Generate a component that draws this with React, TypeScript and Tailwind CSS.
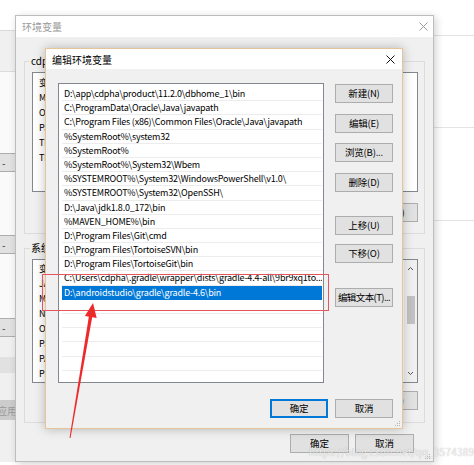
import React from "react";

const paths = [
  "D:\\app\\cdpha\\product\\11.2.0\\dbhome_1\\bin",
  "C:\\ProgramData\\Oracle\\Java\\javapath",
  "C:\\Program Files (x86)\\Common Files\\Oracle\\Java\\javapath",
  "%SystemRoot%\\system32",
  "%SystemRoot%",
  "%SystemRoot%\\System32\\Wbem",
  "%SYSTEMROOT%\\System32\\WindowsPowerShell\\v1.0\\",
  "%SYSTEMROOT%\\System32\\OpenSSH\\",
  "D:\\Java\\jdk1.8.0_172\\bin",
  "%MAVEN_HOME%\\bin",
  "D:\\Program Files\\Git\\cmd",
  "D:\\Program Files\\TortoiseSVN\\bin",
  "D:\\Program Files\\TortoiseGit\\bin",
  "C:\\Users\\cdpha\\.gradle\\wrapper\\dists\\gradle-4.4-all\\9br9xq1to...",
  "D:\\androidstudio\\gradle\\gradle-4.6\\bin",
  "", "", "", "", "", "",
];

const userVars = ["变量", "MOZ_PLUGIN_PATH", "OneDrive", "Path", "TEMP", "TMP"];
const sysVars = ["变量", "JAVA_HOME", "MAVEN_HOME", "NUMBER_OF_PROCESSORS", "OS", "Path", "PATHEXT", "PERL_HOME"];

function CloseX({ color }: { color: string }) {
  return (
    <svg width="9" height="9" viewBox="0 0 9 9">
      <path d="M0.5 0.5 L8.5 8.5 M8.5 0.5 L0.5 8.5" stroke={color} strokeWidth="1" />
    </svg>
  );
}

function Grip() {
  return (
    <svg width="6" height="6" viewBox="0 0 6 6">
      <rect x="4" y="0" width="1" height="1" fill="#b5b5b5" />
      <rect x="2" y="2" width="1" height="1" fill="#b5b5b5" />
      <rect x="4" y="2" width="1" height="1" fill="#b5b5b5" />
      <rect x="0" y="4" width="1" height="1" fill="#b5b5b5" />
      <rect x="2" y="4" width="1" height="1" fill="#b5b5b5" />
      <rect x="4" y="4" width="1" height="1" fill="#b5b5b5" />
    </svg>
  );
}

function Btn({ label, focus, tight }: { label: string; focus?: boolean; tight?: boolean }) {
  const base = focus
    ? "w-[58px] h-[19px] flex items-center justify-center whitespace-nowrap bg-[#e1e1e1] border-2 border-[#0078d7] text-[9.5px] text-black"
    : "w-[58px] h-[19px] flex items-center justify-center whitespace-nowrap bg-[#e1e1e1] border border-[#adadad] text-[9.5px] text-black";
  return (
    <div className={base + (tight ? " tracking-[-0.6px]" : " tracking-[-0.2px]")}>
      {label}
    </div>
  );
}

export default function App() {
  return (
    <div className="relative w-[474px] h-[465px] overflow-hidden bg-white font-['Noto_Sans_CJK_SC',sans-serif]">
      {/* faint lines of the window behind, right side */}
      <div className="absolute left-0 right-0 top-[35px] h-px bg-[#e4e4e4]" />
      <div className="absolute left-[434px] right-0 top-[127px] h-px bg-[#e4e4e4]" />
      <div className="absolute left-[434px] right-0 top-[220px] h-px bg-[#e4e4e4]" />

      {/* system properties window, left strip */}
      <div className="absolute left-0 top-[30px] w-[15px] h-[432px] bg-[#f0f0f0] border-t border-[#dadada] flex flex-col overflow-hidden text-[10px]">
        <div className="h-[41px] border-b border-[#dcdcdc]" />
        <div className="h-[81px] bg-[#fafafa]" />
        <div className="h-[19px] bg-[#e1e1e1] border-y border-[#adadad] flex items-center pl-[2px] text-[#333]">-</div>
        <div className="h-[63px] bg-[#fafafa]" />
        <div className="h-[19px] bg-[#e1e1e1] border-y border-[#adadad] flex items-center pl-[2px] text-[#333]">-</div>
        <div className="h-[64px] bg-[#fafafa]" />
        <div className="h-[19px] bg-[#e1e1e1] border-y border-[#adadad] flex items-center pl-[2px] text-[#333]">-</div>
        <div className="h-[20px]" />
        <div className="h-[16px] bg-[#e1e1e1]" />
        <div className="h-[27px]" />
        <div className="h-[20px] bg-[#cccccc] flex items-center whitespace-nowrap text-[#9a9a9a] -ml-[3px]">应用(A)</div>
      </div>

      {/* 环境变量 window */}
      <div className="absolute left-[15px] top-[15px] w-[419px] h-[447px] bg-[#f0f0f0] border border-[#bdbdbd] shadow-[2px_2px_8px_rgba(0,0,0,0.18)] flex flex-col">
        <div className="h-[21px] bg-white flex items-center justify-between pl-[6px] pr-[5px] text-[10px] text-[#999]">
          <span>环境变量</span>
          <CloseX color="#999" />
        </div>
        <div className="flex-1 flex flex-col px-[8px] pt-[17px]">
          <fieldset className="border border-[#dcdcdc] pl-[7px] pr-[6px] pb-[11px]">
            <legend className="-ml-[2px] px-[1px] text-[10px] text-black leading-[14px]">cdpha 的用户变量(U)</legend>
            <div className="mt-[4px] h-[120px] bg-white border border-[#828790] pt-[2px] pl-[6px] text-[9px] tracking-[-0.1px] text-black">
              {userVars.map((v) => (
                <div key={v} className="h-[15px] leading-[15px]">{v}</div>
              ))}
            </div>
            <div className="mt-[11px] flex justify-end">
              <Btn label="删除(D)" />
            </div>
          </fieldset>
          <fieldset className="mt-[7px] border border-[#dcdcdc] pl-[7px] pr-[6px] pb-[12px]">
            <legend className="-ml-[2px] px-[1px] text-[10px] text-black leading-[14px]">系统变量(S)</legend>
            <div className="mt-[4px] h-[124px] bg-white border border-[#828790] flex text-[9px] tracking-[-0.1px] text-black">
              <div className="flex-1 pt-[1px] pl-[6px]">
                {sysVars.map((v) => (
                  <div key={v} className="h-[15px] leading-[15px]">{v}</div>
                ))}
              </div>
              <div className="w-[13px] bg-[#f0f0f0] flex flex-col items-center">
                <svg width="7" height="14" viewBox="0 0 7 14" className="mt-[2px]">
                  <path d="M1 8 L3.5 5.5 L6 8" stroke="#555" strokeWidth="1" fill="none" />
                </svg>
                <div className="mt-[20px] w-[8px] h-[28px] bg-[#c2c2c2]" />
                <div className="flex-1" />
                <svg width="7" height="14" viewBox="0 0 7 14" className="mb-[2px]">
                  <path d="M1 6 L3.5 8.5 L6 6" stroke="#555" strokeWidth="1" fill="none" />
                </svg>
              </div>
            </div>
            <div className="mt-[8px] flex justify-end">
              <Btn label="删除(L)" />
            </div>
          </fieldset>
          <div className="mt-[11px] flex justify-end gap-[6px] pr-[11px]">
            <div className="w-[59px] h-[19px] flex items-center justify-center bg-[#e1e1e1] border border-[#adadad] text-[9.5px] text-black">确定</div>
            <div className="w-[59px] h-[19px] flex items-center justify-center bg-[#e1e1e1] border border-[#adadad] text-[9.5px] text-black">取消</div>
          </div>
          <div className="flex-1 flex items-end justify-end pb-[1px] -mr-[6px]">
            <Grip />
          </div>
        </div>
      </div>

      {/* 编辑环境变量 dialog */}
      <div className="absolute left-[45px] top-[48px] w-[358px] h-[381px] bg-[#f0f0f0] border border-[#e6c49a] shadow-[0_0_10px_rgba(0,0,0,0.25)] flex flex-col">
        <div className="h-[20px] bg-white flex items-center justify-between pl-[6px] pr-[7px] text-[10px] text-black">
          <span>编辑环境变量</span>
          <CloseX color="#111" />
        </div>
        <div className="flex-1 flex flex-col pl-[12px] pr-[9px]">
          <div className="mt-[14px] flex">
            <div className="w-[266px] h-[300px] bg-white border border-[#828790] pt-[3px] pr-[1px] overflow-hidden text-[9px] tracking-[-0.2px]">
              {paths.map((p, i) => (
                <div key={i} className="h-[14.2px] pl-[3px]">
                  <div
                    className={
                      i === 14
                        ? "h-full pl-[2px] leading-[14px] whitespace-nowrap overflow-hidden bg-[#0078d7] text-white"
                        : "h-full pl-[2px] leading-[14px] whitespace-nowrap overflow-hidden border-b border-[#ececec] text-black"
                    }
                  >
                    {p}
                  </div>
                </div>
              ))}
            </div>
            <div className="ml-[11px] flex flex-col">
              <div className="mt-[1px]"><Btn label="新建(N)" /></div>
              <div className="mt-[11px]"><Btn label="编辑(E)" /></div>
              <div className="mt-[10px]"><Btn label="浏览(B)..." /></div>
              <div className="mt-[11px]"><Btn label="删除(D)" /></div>
              <div className="mt-[24px]"><Btn label="上移(U)" /></div>
              <div className="mt-[9px]"><Btn label="下移(O)" /></div>
              <div className="mt-[25px]"><Btn label="编辑文本(T)..." tight /></div>
            </div>
          </div>
          <div className="mt-[16px] flex justify-end gap-[7px]">
            <Btn label="确定" focus />
            <Btn label="取消" />
          </div>
          <div className="flex-1 flex items-end justify-end pb-[1px] -mr-[8px]">
            <Grip />
          </div>
        </div>
      </div>

      {/* red annotation */}
      <div className="absolute left-[42px] top-[274px] w-[287px] h-[37px] border border-[#e4555f]" />
      <svg className="absolute left-0 top-0" width="474" height="465" viewBox="0 0 474 465">
        <polygon points="69.5,437.9 70.5,438.1 92.7,314.3 89.3,313.7" fill="#ec2a2a" />
        <polygon points="93,303 84.9,316 96.7,318" fill="#ec2a2a" />
      </svg>

      {/* watermark */}
      <div className="absolute left-[309px] top-[445px] text-[10px] leading-[13px] tracking-[0.2px] text-white/80 [text-shadow:0_0_1px_rgba(0,0,0,0.35)] whitespace-nowrap">
        https://blog.csdn.net/qq_35743890
      </div>
    </div>
  );
}
